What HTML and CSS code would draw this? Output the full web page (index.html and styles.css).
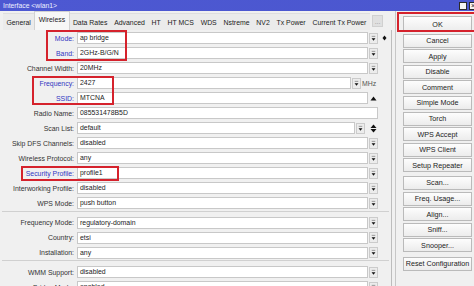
FILE: index.html
```html
<!DOCTYPE html>
<html lang="en">
<head>
  <meta charset="UTF-8" />
  <title>Interface &lt;wlan1&gt;</title>
  <link rel="stylesheet" href="styles.css">
</head>
<body>

  <div class="window">
    <div class="titlebar">
      <span>Interface &lt;wlan1&gt;</span>
      <span class="winbtns">
        <span class="winbtn"></span>
        <span class="winbtn close">&times;</span>
      </span>
    </div>

    <div class="layout">
      <div class="main">
        <div class="tabs">
          <span class="tab">General</span>
          <span class="tab active">Wireless</span>
          <span class="tab">Data Rates</span>
          <span class="tab">Advanced</span>
          <span class="tab">HT</span>
          <span class="tab">HT MCS</span>
          <span class="tab">WDS</span>
          <span class="tab">Nstreme</span>
          <span class="tab">NV2</span>
          <span class="tab">Tx Power</span>
          <span class="tab">Current Tx Power</span>
          <span class="tab more">...</span>
        </div>

        <div class="panel">
          <div class="row">
            <span class="lbl hl">Mode:</span>
            <span class="field">ap bridge</span>
            <span class="dd"><svg width="7" height="9" viewBox="0 0 7 9"><path d="M1 1.5h5" stroke="#777" stroke-width="1"/><path d="M0.8 4h5.4l-2.7 3.6z" fill="#111"/></svg></span>
            <span class="trail"><svg width="5" height="6" viewBox="0 0 5 6"><path d="M2.5 0.5l2 2.5-2 2.5-2-2.5z" fill="#111"/></svg></span>
          </div>
          <div class="row">
            <span class="lbl hl">Band:</span>
            <span class="field">2GHz-B/G/N</span>
            <span class="dd"><svg width="7" height="9" viewBox="0 0 7 9"><path d="M1 1.5h5" stroke="#777" stroke-width="1"/><path d="M0.8 4h5.4l-2.7 3.6z" fill="#111"/></svg></span>
            <span class="trail"></span>
          </div>
          <div class="row">
            <span class="lbl">Channel Width:</span>
            <span class="field">20MHz</span>
            <span class="dd"><svg width="7" height="9" viewBox="0 0 7 9"><path d="M1 1.5h5" stroke="#777" stroke-width="1"/><path d="M0.8 4h5.4l-2.7 3.6z" fill="#111"/></svg></span>
            <span class="trail"></span>
          </div>
          <div class="row">
            <span class="lbl hl">Frequency:</span>
            <span class="field">2427</span>
            <span class="dd"><svg width="7" height="9" viewBox="0 0 7 9"><path d="M1 1.5h5" stroke="#777" stroke-width="1"/><path d="M0.8 4h5.4l-2.7 3.6z" fill="#111"/></svg></span>
            <span class="unit">MHz</span>
            <span class="trail"></span>
          </div>
          <div class="row">
            <span class="lbl hl">SSID:</span>
            <span class="field">MTCNA</span>
            <span class="slot"><svg width="7" height="5" viewBox="0 0 7 5"><path d="M0.5 4.5h6l-3-4z" fill="#111"/></svg></span>
            <span class="trail"></span>
          </div>
          <div class="row">
            <span class="lbl">Radio Name:</span>
            <span class="field">085531478B5D</span>
            <span class="trail"></span>
          </div>
          <div class="row">
            <span class="lbl">Scan List:</span>
            <span class="field">default</span>
            <span class="dd"><svg width="7" height="9" viewBox="0 0 7 9"><path d="M1 1.5h5" stroke="#777" stroke-width="1"/><path d="M0.8 4h5.4l-2.7 3.6z" fill="#111"/></svg></span>
            <span class="spacer"></span>
            <span class="slot"><svg width="7" height="9" viewBox="0 0 7 9"><path d="M0.5 4h6l-3-3.6z" fill="#111"/><path d="M0.5 5h6l-3 3.6z" fill="#111"/></svg></span>
            <span class="trail"></span>
          </div>
          <div class="row">
            <span class="lbl">Skip DFS Channels:</span>
            <span class="field">disabled</span>
            <span class="dd"><svg width="7" height="9" viewBox="0 0 7 9"><path d="M1 1.5h5" stroke="#777" stroke-width="1"/><path d="M0.8 4h5.4l-2.7 3.6z" fill="#111"/></svg></span>
            <span class="trail"></span>
          </div>
          <div class="row">
            <span class="lbl">Wireless Protocol:</span>
            <span class="field">any</span>
            <span class="dd"><svg width="7" height="9" viewBox="0 0 7 9"><path d="M1 1.5h5" stroke="#777" stroke-width="1"/><path d="M0.8 4h5.4l-2.7 3.6z" fill="#111"/></svg></span>
            <span class="trail"></span>
          </div>
          <div class="row">
            <span class="lbl hl">Security Profile:</span>
            <span class="field">profile1</span>
            <span class="dd"><svg width="7" height="9" viewBox="0 0 7 9"><path d="M1 1.5h5" stroke="#777" stroke-width="1"/><path d="M0.8 4h5.4l-2.7 3.6z" fill="#111"/></svg></span>
            <span class="trail"></span>
          </div>
          <div class="row">
            <span class="lbl">Interworking Profile:</span>
            <span class="field">disabled</span>
            <span class="dd"><svg width="7" height="9" viewBox="0 0 7 9"><path d="M1 1.5h5" stroke="#777" stroke-width="1"/><path d="M0.8 4h5.4l-2.7 3.6z" fill="#111"/></svg></span>
            <span class="trail"></span>
          </div>
          <div class="row">
            <span class="lbl">WPS Mode:</span>
            <span class="field">push button</span>
            <span class="dd"><svg width="7" height="9" viewBox="0 0 7 9"><path d="M1 1.5h5" stroke="#777" stroke-width="1"/><path d="M0.8 4h5.4l-2.7 3.6z" fill="#111"/></svg></span>
            <span class="trail"></span>
          </div>

          <div class="sep"></div>

          <div class="row">
            <span class="lbl">Frequency Mode:</span>
            <span class="field">regulatory-domain</span>
            <span class="dd"><svg width="7" height="9" viewBox="0 0 7 9"><path d="M1 1.5h5" stroke="#777" stroke-width="1"/><path d="M0.8 4h5.4l-2.7 3.6z" fill="#111"/></svg></span>
            <span class="trail"></span>
          </div>
          <div class="row">
            <span class="lbl">Country:</span>
            <span class="field">etsi</span>
            <span class="dd"><svg width="7" height="9" viewBox="0 0 7 9"><path d="M1 1.5h5" stroke="#777" stroke-width="1"/><path d="M0.8 4h5.4l-2.7 3.6z" fill="#111"/></svg></span>
            <span class="trail"></span>
          </div>
          <div class="row">
            <span class="lbl">Installation:</span>
            <span class="field">any</span>
            <span class="dd"><svg width="7" height="9" viewBox="0 0 7 9"><path d="M1 1.5h5" stroke="#777" stroke-width="1"/><path d="M0.8 4h5.4l-2.7 3.6z" fill="#111"/></svg></span>
            <span class="trail"></span>
          </div>

          <div class="sep"></div>

          <div class="row">
            <span class="lbl">WMM Support:</span>
            <span class="field">disabled</span>
            <span class="dd"><svg width="7" height="9" viewBox="0 0 7 9"><path d="M1 1.5h5" stroke="#777" stroke-width="1"/><path d="M0.8 4h5.4l-2.7 3.6z" fill="#111"/></svg></span>
            <span class="trail"></span>
          </div>
          <div class="row">
            <span class="lbl">Bridge Mode:</span>
            <span class="field">enabled</span>
            <span class="dd"><svg width="7" height="9" viewBox="0 0 7 9"><path d="M1 1.5h5" stroke="#777" stroke-width="1"/><path d="M0.8 4h5.4l-2.7 3.6z" fill="#111"/></svg></span>
            <span class="trail"></span>
          </div>
        </div>
      </div>

      <div class="side">
        <span class="btn ok">OK</span>
        <span class="btn">Cancel</span>
        <span class="btn">Apply</span>
        <span class="btn">Disable</span>
        <span class="btn">Comment</span>
        <span class="btn">Simple Mode</span>
        <span class="btn">Torch</span>
        <span class="btn">WPS Accept</span>
        <span class="btn">WPS Client</span>
        <span class="btn">Setup Repeater</span>
        <span class="btn group">Scan...</span>
        <span class="btn">Freq. Usage...</span>
        <span class="btn">Align...</span>
        <span class="btn">Sniff...</span>
        <span class="btn">Snooper...</span>
        <span class="btn reset">Reset Configuration</span>
      </div>
    </div>

    <!-- highlight boxes drawn over the form -->
    <div class="mark mark-mode"></div>
    <div class="mark mark-freq"></div>
    <div class="mark mark-sec"></div>
    <div class="mark mark-ok"></div>
  </div>

</body>
</html>
```

FILE: styles.css
```css
* {
  box-sizing: border-box;
}
body {
  margin: 0;
  background: #f0f0f0;
  font-family: "Liberation Sans", Arial, sans-serif;
  font-size: 6.9px;
  color: #222;
  overflow: hidden;
}

.window {
  position: relative;
  width: 474px;
  height: 286px;
  overflow: hidden;
}

/* title bar */
.titlebar {
  height: 11px;
  background: linear-gradient(90deg, #4d58d2, #4b57cf);
  color: #eef0ff;
  font-size: 6.8px;
  display: flex;
  align-items: center;
  justify-content: space-between;
  padding-left: 3px;
}
.winbtns {
  display: flex;
  gap: 2px;
  margin-right: -3px;
}
.winbtn {
  width: 8px;
  height: 8px;
  background: #f4f4f4;
  border: 1px solid #2a2a2a;
  font-size: 7px;
  line-height: 6px;
  text-align: center;
  color: #222;
}

.layout {
  display: flex;
  height: 275px;
}
.main {
  width: 395px;
  display: flex;
  flex-direction: column;
}

/* tabs */
.tabs {
  height: 20px;
  display: flex;
  align-items: flex-end;
  padding-left: 3px;
}
.tab {
  height: 17px;
  padding: 0 3.4px;
  display: flex;
  align-items: center;
  white-space: nowrap;
  background: #ebebeb;
  border-top: 1px solid #dedede;
}
.tab.active {
  height: 19px;
  padding-bottom: 3px;
  background: #f7f7f7;
  border: 1px solid #d2d2d2;
  border-bottom: none;
}
.tab.more {
  height: 12px;
  margin: 0 0 3px 2px;
  padding: 0 2px;
  color: #999;
  background: #e0e0e0;
  border: 1px solid #d0d0d0;
}

/* form panel */
.panel {
  flex: 1;
  margin-right: 3px;
  padding-top: 0.5px;
  border-right: 1px solid #bcbcbc;
}
.row {
  display: flex;
  align-items: center;
  height: 15px;
}
.lbl {
  width: 75px;
  padding-right: 1px;
  margin-right: 2px;
  text-align: right;
  white-space: nowrap;
  color: #333;
}
.lbl.hl {
  color: #3036c2;
}
.field {
  flex: 1;
  height: 12px;
  padding-left: 2px;
  line-height: 10px;
  background: #fff;
  border: 1px solid #c8c8c8;
  white-space: nowrap;
  overflow: hidden;
}
.dd {
  width: 10px;
  height: 12px;
  display: flex;
  align-items: center;
  justify-content: center;
}
.dd svg {
  width: 9px;
  height: 11px;
  padding: 1px;
  background: #ececec;
  border: 1px solid #cbcbcb;
}
.slot {
  width: 10px;
  display: flex;
  justify-content: center;
}
.spacer {
  width: 3px;
}
.unit {
  width: 17px;
  padding-left: 1px;
  color: #555;
}
.trail {
  width: 13px;
  display: flex;
  justify-content: center;
}
.sep {
  height: 4.5px;
  margin: 0 2px;
  border-top: 1px solid #d0d0d0;
}

/* button column */
.side {
  flex: 1;
  display: flex;
  flex-direction: column;
  gap: 1.6px;
  padding: 5px 2px 0 7px;
  border-left: 1px solid #c6c6c6;
  font-size: 7.2px;
}
.btn {
  height: 14px;
  flex-shrink: 0;
  display: flex;
  align-items: center;
  justify-content: center;
  white-space: nowrap;
  background: linear-gradient(#fdfdfd, #ececec);
  border: 1px solid #bababa;
}
.btn.ok {
  height: 16px;
}
.btn.group {
  margin-top: 2px;
}
.btn.reset {
  margin-top: 2.7px;
}

/* red annotation boxes */
.mark {
  position: absolute;
  border: 2px solid #d5222c;
}
.mark-mode {
  left: 46px;
  top: 30px;
  width: 81px;
  height: 31px;
}
.mark-freq {
  left: 32px;
  top: 76px;
  width: 82px;
  height: 29px;
}
.mark-sec {
  left: 21px;
  top: 166px;
  width: 98px;
  height: 15px;
}
.mark-ok {
  left: 397px;
  top: 12px;
  width: 80px;
  height: 20px;
}
```
